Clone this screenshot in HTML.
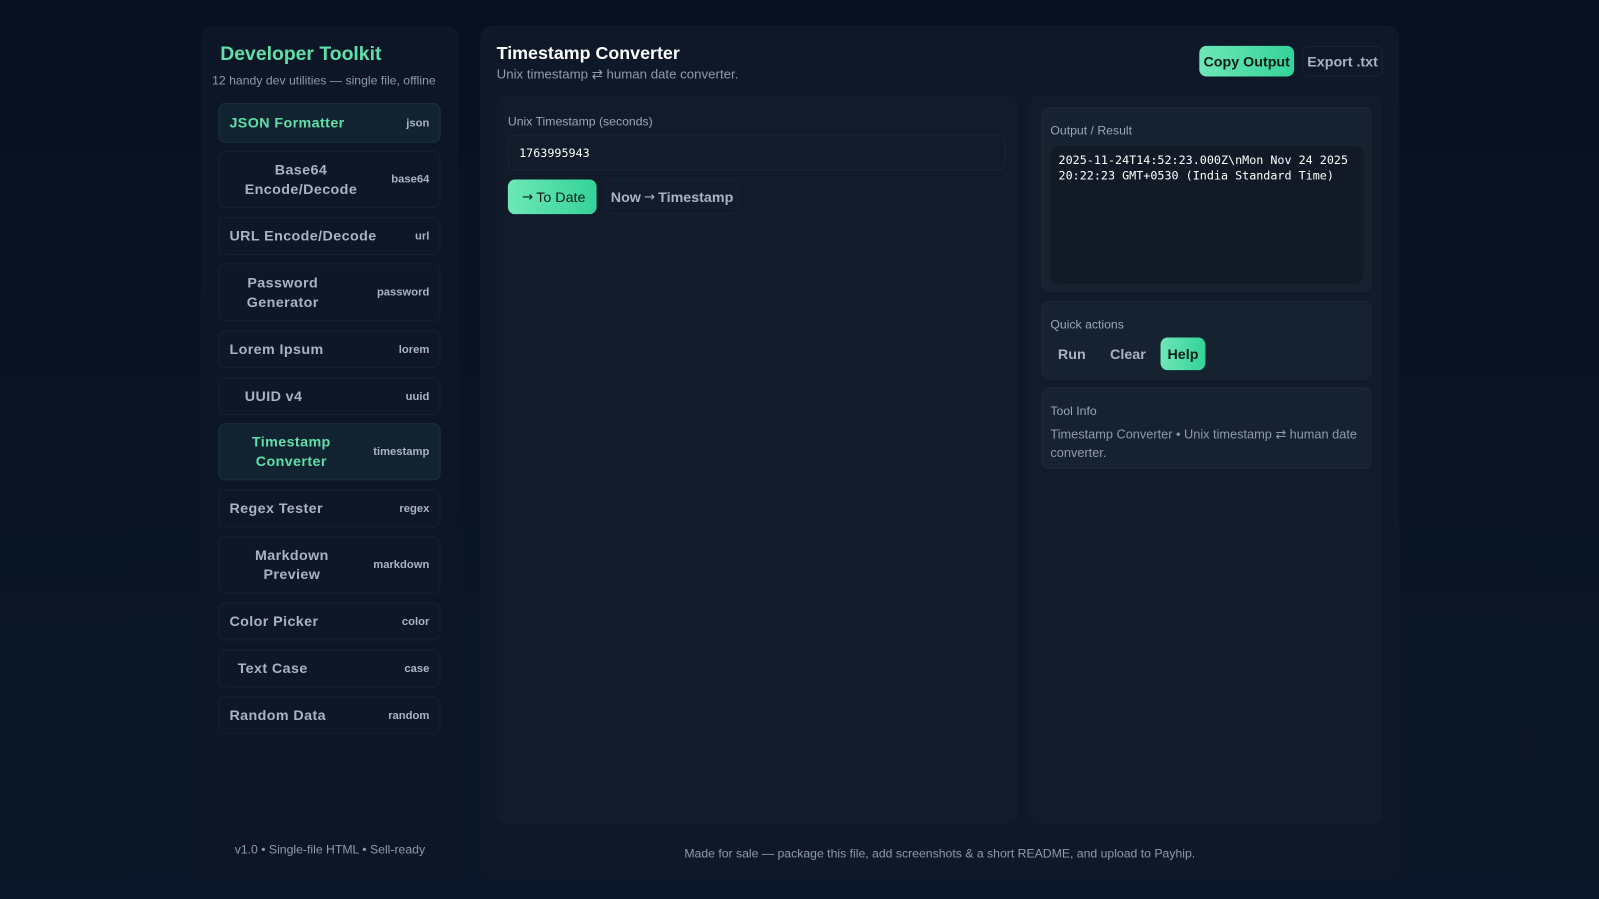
<!DOCTYPE html>
<html><head><meta charset="utf-8"><style>
*{box-sizing:border-box;margin:0;padding:0}
html{background:linear-gradient(180deg,#08101f 0%,#0c1829 100%);width:1599px;height:899px;overflow:hidden}
body{width:1568px;height:882px;transform:scale(1.0198);transform-origin:0 0;font-family:"Liberation Sans",sans-serif;color:#9aa7b8;position:relative}
.side{position:absolute;left:197px;top:25px;width:253px;height:833px;background:#0d1626;border-radius:12px}
.side h1{position:absolute;left:19px;top:18px;font-size:19px;color:#5ee0a8;font-weight:bold;font-family:"Liberation Sans",sans-serif}
.side .sub{position:absolute;left:11px;top:47px;font-size:12px;color:#8e9aab}
.nav{position:absolute;left:17px;width:218px;border:1px solid #142032;border-radius:7px;background:#0d1727;display:flex;align-items:center;justify-content:space-between;padding:0 10px;font-size:14px;font-weight:bold;color:#a9b3c2;letter-spacing:.4px}
.nav.act{background:#112230;border-color:#1b3038;color:#5ee0a8}
.nav.act .t{color:#a9b3c2}
.nav .l{text-align:center;line-height:19px}
.nav .t{font-size:11px;letter-spacing:0}
.side .foot{position:absolute;left:0;right:0;top:801px;text-align:center;font-size:12px;color:#8e9aab}
.main{position:absolute;left:471px;top:25px;width:901px;height:833px;background:#0e1828;border-radius:12px}
.title{position:absolute;left:16px;top:17px;font-size:17.5px;font-weight:bold;color:#fff;font-family:"Liberation Sans",sans-serif}
.msub{position:absolute;left:16px;top:40px;font-size:13px;color:#8e9aab}
.btn{position:absolute;border-radius:7px;font-size:14px;font-weight:bold;display:flex;align-items:center;justify-content:center;border:1px solid #17233a;color:#a9b3c2}
.g{background:linear-gradient(90deg,#6ee7b7,#34d399);color:#0b1b17;border:none}
.ar{font-family:"DejaVu Sans",sans-serif;font-weight:normal;font-size:13px;margin:0 3px}
.panel{position:absolute;background:#111b29;border-radius:10px}
.card{position:absolute;background:#172230;border:1px solid #1c2838;border-radius:8px}
.lab{position:absolute;font-size:12px;color:#9aa7b8}
.mono{font-family:"DejaVu Sans Mono","Liberation Mono",monospace;font-size:11.5px;color:#fff}
</style></head><body>
<div class="side">
<h1>Developer Toolkit</h1>
<div class="sub">12 handy dev utilities — single file, offline</div>
<div class="nav act" style="top:76px;height:39px"><span class="l">JSON Formatter</span><span class="t">json</span></div>
<div class="nav" style="top:123px;height:56px"><span class="l" style="padding-left:15px">Base64<br>Encode/Decode</span><span class="t">base64</span></div>
<div class="nav" style="top:188px;height:37px"><span class="l">URL Encode/Decode</span><span class="t">url</span></div>
<div class="nav" style="top:233px;height:57px"><span class="l" style="padding-left:17px">Password<br>Generator</span><span class="t">password</span></div>
<div class="nav" style="top:299px;height:37px"><span class="l">Lorem Ipsum</span><span class="t">lorem</span></div>
<div class="nav" style="top:345px;height:37px"><span class="l" style="padding-left:15px">UUID v4</span><span class="t">uuid</span></div>
<div class="nav act" style="top:390px;height:56px"><span class="l" style="padding-left:22px">Timestamp<br>Converter</span><span class="t">timestamp</span></div>
<div class="nav" style="top:455px;height:37px"><span class="l">Regex Tester</span><span class="t">regex</span></div>
<div class="nav" style="top:501px;height:56px"><span class="l" style="padding-left:25px">Markdown<br>Preview</span><span class="t">markdown</span></div>
<div class="nav" style="top:566px;height:37px"><span class="l">Color Picker</span><span class="t">color</span></div>
<div class="nav" style="top:612px;height:37px"><span class="l" style="padding-left:8px">Text Case</span><span class="t">case</span></div>
<div class="nav" style="top:658px;height:37px"><span class="l">Random Data</span><span class="t">random</span></div>
<div class="foot">v1.0 • Single-file HTML • Sell-ready</div>
</div>
<div class="main">
<div class="title">Timestamp Converter</div>
<div class="msub">Unix timestamp ⇄ human date converter.</div>
<div class="btn g" style="left:705px;top:20px;width:93px;height:30px">Copy Output</div>
<div class="btn" style="left:806px;top:20px;width:79px;height:30px">Export .txt</div>
<div class="panel" style="left:16px;top:68px;width:511px;height:715px">
<div class="lab" style="left:11px;top:19px">Unix Timestamp (seconds)</div>
<div style="position:absolute;left:11px;top:39px;width:488px;height:35px;border:1px solid #1a2636;border-radius:7px;background:#111b29;padding:10px 10px" class="mono">1763995943</div>
<div class="btn g" style="left:11px;top:83px;width:87px;height:34px;font-weight:normal;font-size:14px"><span class="ar">→</span>To Date</div>
<div class="btn" style="left:107px;top:83px;width:130px;height:34px">Now<span class="ar">→</span>Timestamp</div>
</div>
<div class="panel" style="left:538px;top:68px;width:347px;height:715px">
<div class="card" style="left:12px;top:12px;width:324px;height:181px">
<div class="lab" style="left:8px;top:15px">Output / Result</div>
<div style="position:absolute;left:8px;top:37px;width:307px;height:135px;background:#111a26;border-radius:8px;padding:7px 8px;line-height:15px" class="mono">2025-11-24T14:52:23.000Z\nMon Nov 24 2025<br>20:22:23 GMT+0530 (India Standard Time)</div>
</div>
<div class="card" style="left:12px;top:202px;width:324px;height:77px">
<div class="lab" style="left:8px;top:15px">Quick actions</div>
<div class="btn" style="left:8px;top:35px;width:42px;height:32px">Run</div>
<div class="btn" style="left:59px;top:35px;width:50px;height:32px">Clear</div>
<div class="btn g" style="left:116px;top:35px;width:44px;height:32px">Help</div>
</div>
<div class="card" style="left:12px;top:287px;width:324px;height:80px">
<div class="lab" style="left:8px;top:15px">Tool Info</div>
<div style="position:absolute;left:8px;top:36px;width:312px;font-size:12.5px;line-height:18px;color:#8e9aab">Timestamp Converter • Unix timestamp ⇄ human date converter.</div>
</div>
</div>
<div style="position:absolute;left:0;right:0;top:805px;text-align:center;font-size:12px;color:#8e9aab">Made for sale — package this file, add screenshots &amp; a short README, and upload to Payhip.</div>
</div>
</body></html>
